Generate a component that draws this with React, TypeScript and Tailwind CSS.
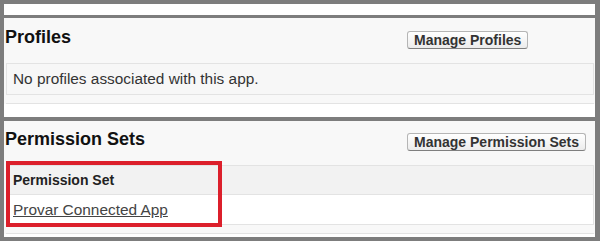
const font = { fontFamily: '"Liberation Sans", Arial, sans-serif' };

function PanelButton({ label }: { label: string }) {
  return (
    <button className="h-[18px] rounded-[3px] border border-[#b5b5b5] border-b-[#7f7f7f] bg-gradient-to-b from-white to-[#ececec] px-[6px] text-[14px] font-bold leading-[16px] text-[#333]">
      {label}
    </button>
  );
}

function Spacer() {
  return <div className="ml-[2px] mr-[1px] h-[10px] border-y border-[#e3e3e3] bg-[#f8f8f8]" />;
}

export default function App() {
  return (
    <div
      className="h-[241px] w-[600px] overflow-hidden bg-[#7d7d7d] pl-[4px] pr-[5px] pt-[4px]"
      style={font}
    >
      <div className="h-[11px] bg-white" />
      <div className="h-[3px]" />

      {/* Profiles */}
      <section className="bg-[#f8f8f8]">
        <div className="flex h-[45px]">
          <h2 className="w-[403px] pl-[1px] pt-[8px] text-[18px] font-bold leading-[22px] text-[#111]">
            Profiles
          </h2>
          <div className="pt-[10px]">
            <PanelButton label="Manage Profiles" />
          </div>
        </div>
        <div className="ml-[2px] mr-[1px] flex h-[31px] items-center border-t border-x border-[#e3e3e3] bg-[#f7f7f7] pl-[6px] text-[15.4px] text-[#333]">
          No profiles associated with this app.
        </div>
        <Spacer />
        <div className="h-[13px] bg-white" />
      </section>

      <div className="h-[4px]" />

      {/* Permission Sets */}
      <section className="relative bg-[#f8f8f8]">
        <div className="flex h-[44px]">
          <h2 className="w-[403px] pl-[1px] pt-[7px] text-[18px] font-bold leading-[22px] text-[#111]">
            Permission Sets
          </h2>
          <div className="pt-[9px]">
            <PanelButton label="Manage Permission Sets" />
          </div>
        </div>
        <div className="ml-[2px] mr-[1px] border-x border-[#e3e3e3]">
          <div className="flex h-[29px] items-center border-t border-[#e3e3e3] bg-[#f2f2f2] pl-[6px] text-[14px] font-bold text-[#222]">
            Permission Set
          </div>
          <div className="flex h-[30px] items-center border-t border-[#e3e3e3] bg-white pl-[6px] text-[15.4px]">
            <a href="#" className="text-[#444] underline">
              Provar Connected App
            </a>
          </div>
        </div>
        <Spacer />
        <div className="h-[3px] bg-white" />

        <div className="absolute left-[2px] top-[40px] h-[66px] w-[216px] border-4 border-[#dc1f2b]" />
      </section>
    </div>
  );
}
